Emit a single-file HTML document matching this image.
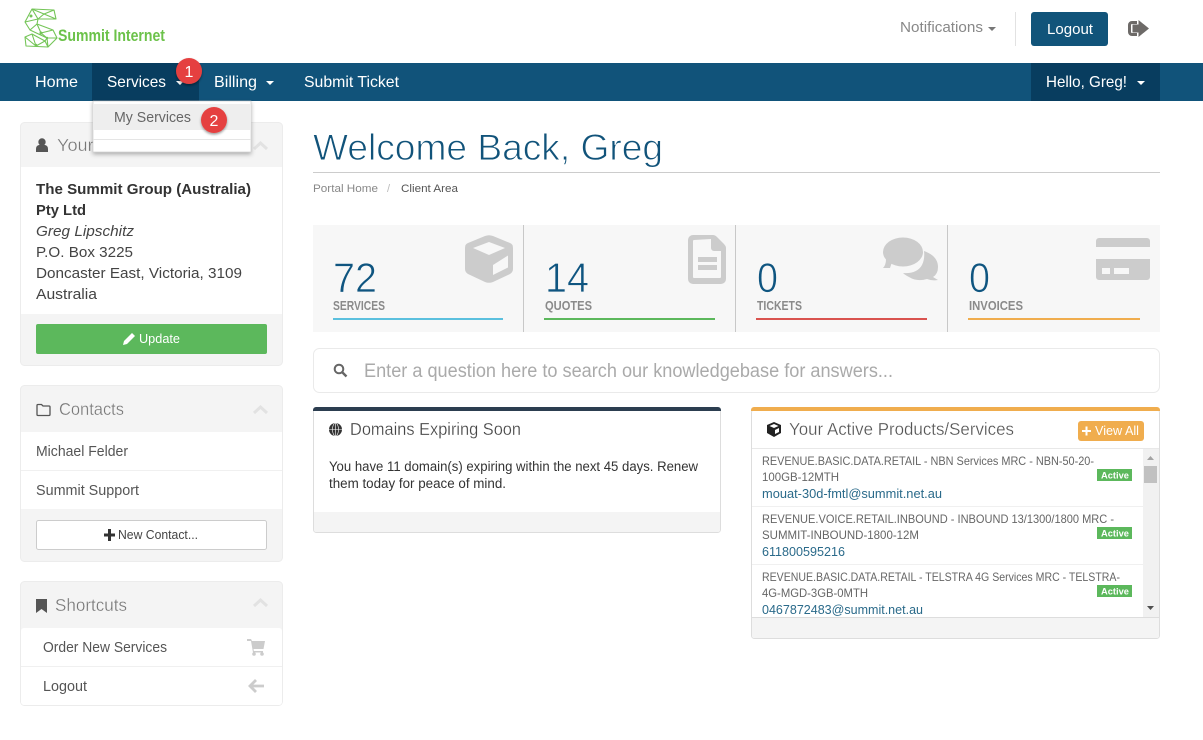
<!DOCTYPE html>
<html lang="en"><head><meta charset="utf-8"><title>Client Area</title>
<style>
html,body{margin:0;padding:0;background:#fff;width:1203px;height:740px;overflow:hidden}
svg{display:block;position:absolute;left:0;top:0}
text{font-family:"Liberation Sans",Arial,sans-serif;white-space:pre}
.b{font-size:14.5px;fill:#444}
.n{font-size:16px;fill:#fff}
.r{font-size:12px;fill:#666}
.m{font-size:13px;fill:#2a6a8a}
.a{font-size:9.500px;font-weight:bold;fill:#fff}
.num{font-size:42px;fill:#0f5580;stroke:#f7f7f7;stroke-width:.8px}
.lab{font-size:12.500px;fill:#8a8a8a;font-weight:bold}
.hd{font-size:17.500px;fill:#777;stroke:#f4f4f4;stroke-width:.3px}
.hw{font-size:17.500px;stroke:#fff;stroke-width:.25px}
</style></head><body>
<svg width="1203" height="740" viewBox="0 0 1203 740" xmlns="http://www.w3.org/2000/svg">
<defs>
<filter id="s" x="-20%" y="-20%" width="140%" height="150%"><feDropShadow dx="0" dy="2" stdDeviation="2" flood-color="#000" flood-opacity=".3"/></filter>
<filter id="s2" x="-30%" y="-30%" width="160%" height="170%"><feDropShadow dx="0" dy="1.500" stdDeviation="1.200" flood-color="#000" flood-opacity=".4"/></filter>
<clipPath id="list"><rect x="752" y="448" width="391" height="169"/></clipPath>
</defs>
<rect width="1203" height="740" fill="#fff"/>

<!-- logo -->
<g fill="none" stroke="#74c557" stroke-width="1.100" stroke-linejoin="round">
<path d="M32 9L54 10L56 19L38 19L37 24L53 30L57 38L48 47L26 46L25 37L32 34L45 41L47 38L30 30L25 22Z"/>
<path d="M32 9L38 19L25 22M32 9L44 14L54 10M44 14L38 19M44 14L56 19M37 24L30 30M37 24L41 33L53 30M41 33L47 38L57 38M47 38L48 47M45 41L36 46L32 34M45 41L48 47M25 37L36 46"/>
</g>
<g fill="#74c557"><circle cx="31" cy="16" r="1.500"/><circle cx="41" cy="33" r="1.500"/><circle cx="47" cy="38" r="1.200"/><circle cx="36" cy="45" r="1.300"/></g>
<text x="58" y="41" textLength="107" lengthAdjust="spacingAndGlyphs" font-size="16.500" font-weight="bold" fill="#6cc24a">Summit Internet</text>

<!-- top right -->
<text x="900" y="32" textLength="83" lengthAdjust="spacingAndGlyphs" font-size="14.500" fill="#888">Notifications</text>
<path d="M988 27h8l-4 4z" fill="#777"/>
<rect x="1015" y="12" width="1" height="34" fill="#e2e2e2"/>
<rect x="1031" y="12" width="77" height="34" rx="3" fill="#11547a"/>
<text x="1047" y="34" textLength="46" lengthAdjust="spacingAndGlyphs" font-size="15" fill="#fff">Logout</text>
<path d="M1137 21h-5a4 4 0 0 0-4 4v7a4 4 0 0 0 4 4h5v-3h-5a1 1 0 0 1-1-1v-7a1 1 0 0 1 1-1h5z" fill="#6d6a68"/>
<path d="M1132.500 24.500h6V20l10.500 8.500-10.500 8.500v-4.500h-6z" fill="#6d6a68"/>

<!-- nav -->
<rect y="63" width="1203" height="38" fill="#11537a"/>
<rect x="92" y="63" width="107" height="38" fill="#083d5f"/>
<rect x="1031" y="63" width="129" height="38" fill="#083d5f"/>
<text class="n" x="35" y="87" textLength="43" lengthAdjust="spacingAndGlyphs">Home</text>
<text class="n" x="107" y="87" textLength="59" lengthAdjust="spacingAndGlyphs">Services</text>
<path d="M176 81h8l-4 4z" fill="#fff"/>
<text class="n" x="214" y="87" textLength="43" lengthAdjust="spacingAndGlyphs">Billing</text>
<path d="M266 81h8l-4 4z" fill="#fff"/>
<text class="n" x="304" y="87" textLength="95" lengthAdjust="spacingAndGlyphs">Submit Ticket</text>
<text class="n" x="1046" y="87" textLength="81" lengthAdjust="spacingAndGlyphs">Hello, Greg!</text>
<path d="M1137 81h8l-4 4z" fill="#fff"/>

<!-- left panel 1 -->
<rect x="20.500" y="122.500" width="262" height="243" rx="4" fill="#f4f4f4" stroke="#ececec"/>
<rect x="21" y="167" width="261" height="147" fill="#fff"/>
<circle cx="42" cy="142" r="3.700" fill="#555"/>
<path d="M36 152v-3a4 4 0 0 1 3-4h6a4 4 0 0 1 3 4v3z" fill="#555"/>
<text class="hd" x="57" y="151" textLength="72" lengthAdjust="spacingAndGlyphs">Your Info</text>
<path d="M254 149l6.500-6 6.500 6" fill="none" stroke="#e2e2e2" stroke-width="3"/>
<text class="b" x="36" y="194" textLength="215" lengthAdjust="spacingAndGlyphs" font-weight="bold" style="fill:#333">The Summit Group (Australia)</text>
<text class="b" x="36" y="215" textLength="50" lengthAdjust="spacingAndGlyphs" font-weight="bold" style="fill:#333">Pty Ltd</text>
<text class="b" x="36" y="236" textLength="98" lengthAdjust="spacingAndGlyphs" font-style="italic">Greg Lipschitz</text>
<text class="b" x="36" y="257" textLength="97" lengthAdjust="spacingAndGlyphs">P.O. Box 3225</text>
<text class="b" x="36" y="278" textLength="206" lengthAdjust="spacingAndGlyphs">Doncaster East, Victoria, 3109</text>
<text class="b" x="36" y="299" textLength="61" lengthAdjust="spacingAndGlyphs">Australia</text>
<rect x="36" y="324" width="231" height="30" rx="2" fill="#5cb85c"/>
<path d="M123 345l1-4 8-8 3 3-8 8z" fill="#fff"/>
<text x="139" y="343" textLength="41" lengthAdjust="spacingAndGlyphs" font-size="12.500" fill="#fff">Update</text>

<!-- left panel 2 -->
<rect x="20.500" y="385.500" width="262" height="176" rx="4" fill="#f4f4f4" stroke="#ececec"/>
<rect x="21" y="432" width="261" height="77" fill="#fff"/>
<rect x="21" y="470" width="261" height="1" fill="#f0f0f0"/>
<path d="M37 414.500v-9a1 1 0 0 1 1-1h3.500l1.500 1.500h6a1 1 0 0 1 1 1v7.500a1 1 0 0 1-1 1H38a1 1 0 0 1-1-1z" fill="none" stroke="#555" stroke-width="1.300"/>
<text class="hd" x="59" y="415" textLength="65" lengthAdjust="spacingAndGlyphs">Contacts</text>
<path d="M254 413l6.500-6 6.500 6" fill="none" stroke="#e2e2e2" stroke-width="3"/>
<text class="b" x="36" y="456" textLength="92" lengthAdjust="spacingAndGlyphs" style="fill:#555">Michael Felder</text>
<text class="b" x="36" y="495" textLength="103" lengthAdjust="spacingAndGlyphs" style="fill:#555">Summit Support</text>
<rect x="36.500" y="520.500" width="230" height="29" rx="2" fill="#fff" stroke="#ccc"/>
<path d="M104 533.500h4v-4.500h3v4.500h4v3h-4v4.500h-3v-4.500h-4z" fill="#333"/>
<text x="118" y="539" textLength="80" lengthAdjust="spacingAndGlyphs" font-size="12.500" fill="#444">New Contact...</text>

<!-- left panel 3 -->
<rect x="20.500" y="581.500" width="262" height="124" rx="4" fill="#f4f4f4" stroke="#ececec"/>
<rect x="21" y="628" width="261" height="77" rx="3" fill="#fff"/>
<rect x="21" y="666" width="261" height="1" fill="#f0f0f0"/>
<path d="M36 599h11v14l-5.500-4-5.500 4z" fill="#555"/>
<text class="hd" x="55" y="611" textLength="72" lengthAdjust="spacingAndGlyphs">Shortcuts</text>
<path d="M254 606l6.500-6 6.500 6" fill="none" stroke="#e2e2e2" stroke-width="3"/>
<text class="b" x="43" y="652" textLength="124" lengthAdjust="spacingAndGlyphs" style="fill:#555">Order New Services</text>
<text class="b" x="43" y="691" textLength="44" lengthAdjust="spacingAndGlyphs" style="fill:#555">Logout</text>
<path d="M247 639h4l1 2h13l-1.500 8h-10l.3 2H263v1.500h-10l-2-11.500h-4z" fill="#ccc"/>
<circle cx="254" cy="654" r="1.800" fill="#ccc"/><circle cx="262" cy="654" r="1.800" fill="#ccc"/>
<path d="M264 686h-13M256 680l-6 6 6 6" fill="none" stroke="#ccc" stroke-width="2.800"/>

<!-- dropdown -->
<rect x="93" y="101" width="158" height="51" fill="#fff" stroke="#c8c8c8" stroke-width=".6" filter="url(#s)"/>
<rect x="93" y="104" width="158" height="26" fill="#eee"/>
<rect x="93" y="139" width="158" height="1" fill="#e5e5e5"/>
<text x="114" y="122" textLength="77" lengthAdjust="spacingAndGlyphs" font-size="14.500" fill="#666">My Services</text>
<circle cx="189" cy="71" r="13" fill="#e5403f" filter="url(#s2)"/>
<text x="189" y="77" text-anchor="middle" font-size="16" fill="#fff">1</text>
<circle cx="214" cy="120" r="13" fill="#e5403f" filter="url(#s2)"/>
<text x="214" y="126" text-anchor="middle" font-size="16" fill="#fff">2</text>

<!-- title -->
<text x="313" y="160" textLength="350" lengthAdjust="spacingAndGlyphs" font-size="37" fill="#11537a" stroke="#fff" stroke-width=".9">Welcome Back, Greg</text>
<rect x="313" y="172" width="847" height="1" fill="#ccc"/>
<text x="313" y="192" textLength="65" lengthAdjust="spacingAndGlyphs" font-size="11" fill="#888">Portal Home</text>
<text x="387" y="192" font-size="11" fill="#bbb">/</text>
<text x="401" y="192" textLength="57" lengthAdjust="spacingAndGlyphs" font-size="11" fill="#555">Client Area</text>

<!-- stats -->
<rect x="313" y="225" width="847" height="107" fill="#f7f7f7"/>
<rect x="523" y="225" width="1" height="107" fill="#c8c8c8"/>
<rect x="735" y="225" width="1" height="107" fill="#c8c8c8"/>
<rect x="947" y="225" width="1" height="107" fill="#c8c8c8"/>

<path d="M485 236q4-1.500 8 0l17 7q3 1 3 5v21q0 3-3 5l-17 8q-4 1.500-8 0l-17-8q-3-2-3-5v-21q0-4 3-5z" fill="#ccc"/>
<path d="M489 242l16 6-16 7-16-7z" fill="#f7f7f7"/>
<path d="M493 265l15-9.500v12L493 275z" fill="#f7f7f7"/>

<path d="M693 235h20q2 0 4 2l6.500 6.500q2.500 2.500 2.500 4.500v31a5 5 0 0 1-5 5h-28a5 5 0 0 1-5-5v-39a5 5 0 0 1 5-5zm1 5a1 1 0 0 0-1 1v36a1 1 0 0 0 1 1h26a1 1 0 0 0 1-1v-26h-7a3 3 0 0 1-3-3v-9z" fill="#ccc" fill-rule="evenodd"/>
<rect x="698" y="257" width="19" height="5" fill="#ccc"/><rect x="698" y="265" width="19" height="5" fill="#ccc"/>

<path d="M924 251q14 5 14 16 0 7-5 10l5 3q-6 1-11-1-10 3-18-2-4-2-6-4 14 1 19-8 3-6 2-14z" fill="#ccc"/>
<ellipse cx="903" cy="252" rx="20" ry="14.500" fill="#ccc"/>
<path d="M892 262l-2 6h-7q3-3 3-9z" fill="#ccc"/>

<path d="M1099 238h48a3 3 0 0 1 3 3v6h-54v-6a3 3 0 0 1 3-3zM1096 259h54v18a3 3 0 0 1-3 3h-48a3 3 0 0 1-3-3z" fill="#ccc"/>
<rect x="1102" y="268" width="8" height="6" fill="#f7f7f7"/><rect x="1114" y="268" width="15" height="6" fill="#f7f7f7"/>

<text class="num" x="333" y="292" textLength="44" lengthAdjust="spacingAndGlyphs">72</text>
<text class="num" x="545" y="292" textLength="44" lengthAdjust="spacingAndGlyphs">14</text>
<text class="num" x="757" y="292" textLength="21" lengthAdjust="spacingAndGlyphs">0</text>
<text class="num" x="969" y="292" textLength="21" lengthAdjust="spacingAndGlyphs">0</text>
<text class="lab" x="333" y="310" textLength="52" lengthAdjust="spacingAndGlyphs">SERVICES</text>
<text class="lab" x="545" y="310" textLength="47" lengthAdjust="spacingAndGlyphs">QUOTES</text>
<text class="lab" x="757" y="310" textLength="45" lengthAdjust="spacingAndGlyphs">TICKETS</text>
<text class="lab" x="969" y="310" textLength="54" lengthAdjust="spacingAndGlyphs">INVOICES</text>
<rect x="333" y="318" width="170" height="2" fill="#5bc0de"/>
<rect x="544" y="318" width="171" height="2" fill="#5cb85c"/>
<rect x="756" y="318" width="171" height="2" fill="#d9534f"/>
<rect x="968" y="318" width="172" height="2" fill="#f0ad4e"/>

<!-- search -->
<rect x="313.500" y="348.500" width="846" height="44" rx="6" fill="#fff" stroke="#eaeaea"/>
<circle cx="339" cy="369" r="4.300" fill="none" stroke="#666" stroke-width="2"/>
<path d="M342 372l4.500 4.500" stroke="#666" stroke-width="2.400"/>
<text x="364" y="377" textLength="529" lengthAdjust="spacingAndGlyphs" font-size="19" fill="#aaa">Enter a question here to search our knowledgebase for answers...</text>

<!-- domains -->
<rect x="313.500" y="408.500" width="407" height="124" rx="3" fill="#fff" stroke="#ddd"/>
<path d="M313 411v-1a3 3 0 0 1 3-3h402a3 3 0 0 1 3 3v1z" fill="#2c3e50"/>
<path d="M314 512h406v18a2 2 0 0 1-2 2H316a2 2 0 0 1-2-2z" fill="#f4f4f4"/>
<circle cx="335.500" cy="429.500" r="6.500" fill="#333"/>
<path d="M329 429.500h13M335.500 423v13" stroke="#fff" stroke-width=".6" fill="none"/>
<ellipse cx="335.500" cy="429.500" rx="3" ry="6.500" fill="none" stroke="#fff" stroke-width=".6"/>
<text class="hw" x="350" y="435" textLength="171" lengthAdjust="spacingAndGlyphs" fill="#444">Domains Expiring Soon</text>
<text x="329" y="471" textLength="369" lengthAdjust="spacingAndGlyphs" font-size="13.500" fill="#333">You have 11 domain(s) expiring within the next 45 days. Renew</text>
<text x="329" y="488" textLength="177" lengthAdjust="spacingAndGlyphs" font-size="13.500" fill="#333">them today for peace of mind.</text>

<!-- products -->
<rect x="751.500" y="409.500" width="408" height="229" rx="3" fill="#fff" stroke="#ddd"/>
<path d="M751 411v-1a3 3 0 0 1 3-3h403a3 3 0 0 1 3 3v1z" fill="#f0ad4e"/>
<rect x="752" y="448" width="407" height="1" fill="#e8e8e8"/>
<path d="M752 617h407v19a2 2 0 0 1-2 2H754a2 2 0 0 1-2-2z" fill="#f4f4f4"/>
<rect x="752" y="617" width="407" height="1" fill="#ddd"/>
<path d="M774 422l7 3v8l-7 4-7-4v-8z" fill="#222"/>
<path d="M774 424l4.500 2-4.500 2-4.500-2zM775 430l4-2v4l-4 2z" fill="#fff"/>
<text class="hw" x="789" y="435" textLength="225" lengthAdjust="spacingAndGlyphs" fill="#555">Your Active Products/Services</text>
<rect x="1078" y="421" width="66" height="20" rx="3" fill="#f0ad4e"/>
<path d="M1082 430h3.500v-3.500h2v3.500h3.500v2h-3.500v3.500h-2V432h-3.500z" fill="#fff"/>
<text x="1095" y="435" textLength="44" lengthAdjust="spacingAndGlyphs" font-size="13" fill="#fff">View All</text>

<g clip-path="url(#list)">
<text class="r" x="762" y="465" textLength="332" lengthAdjust="spacingAndGlyphs">REVENUE.BASIC.DATA.RETAIL - NBN Services MRC - NBN-50-20-</text>
<text class="r" x="762" y="481" textLength="77" lengthAdjust="spacingAndGlyphs">100GB-12MTH</text>
<text class="m" x="762" y="498" textLength="180" lengthAdjust="spacingAndGlyphs">mouat-30d-fmtl@summit.net.au</text>
<rect x="752" y="506" width="391" height="1" fill="#f0f0f0"/>
<text class="r" x="762" y="523" textLength="352" lengthAdjust="spacingAndGlyphs">REVENUE.VOICE.RETAIL.INBOUND - INBOUND 13/1300/1800 MRC -</text>
<text class="r" x="762" y="539" textLength="157" lengthAdjust="spacingAndGlyphs">SUMMIT-INBOUND-1800-12M</text>
<text class="m" x="762" y="556" textLength="83" lengthAdjust="spacingAndGlyphs">611800595216</text>
<rect x="752" y="564" width="391" height="1" fill="#f0f0f0"/>
<text class="r" x="762" y="581" textLength="358" lengthAdjust="spacingAndGlyphs">REVENUE.BASIC.DATA.RETAIL - TELSTRA 4G Services MRC - TELSTRA-</text>
<text class="r" x="762" y="597" textLength="106" lengthAdjust="spacingAndGlyphs">4G-MGD-3GB-0MTH</text>
<text class="m" x="762" y="614" textLength="161" lengthAdjust="spacingAndGlyphs">0467872483@summit.net.au</text>
</g>
<rect x="1097" y="469" width="35" height="12" fill="#5cb85c"/><text class="a" x="1101" y="478.500" textLength="28" lengthAdjust="spacingAndGlyphs">Active</text>
<rect x="1097" y="527" width="35" height="12" fill="#5cb85c"/><text class="a" x="1101" y="536.500" textLength="28" lengthAdjust="spacingAndGlyphs">Active</text>
<rect x="1097" y="585" width="35" height="12" fill="#5cb85c"/><text class="a" x="1101" y="594.500" textLength="28" lengthAdjust="spacingAndGlyphs">Active</text>

<rect x="1143" y="449" width="16" height="168" fill="#f1f1f1"/>
<rect x="1144" y="466" width="13" height="17" fill="#c1c1c1"/>
<path d="M1147 460l3.500-4 3.500 4z" fill="#a3a3a3"/>
<path d="M1147 606l3.500 4 3.500-4z" fill="#505050"/>
</svg>
</body></html>
